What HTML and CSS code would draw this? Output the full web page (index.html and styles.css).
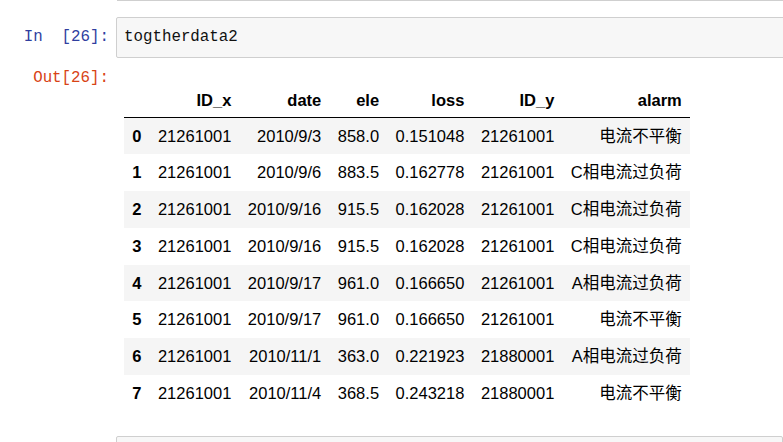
FILE: index.html
```html
<!DOCTYPE html>
<html>
<head>
<meta charset="utf-8">
<link rel="stylesheet" href="styles.css">
</head>
<body>
<div class="nb">
  <div class="prev-cell"></div>
  <div class="cell-row input-row">
    <div class="prompt in-prompt">In&nbsp;&nbsp;[26]:</div>
    <div class="input-box">togtherdata2</div>
  </div>
  <div class="cell-row output-row">
    <div class="prompt out-prompt">Out[26]:</div>
    <div class="output">
      <table class="df">
        <thead>
          <tr><th></th><th>ID_x</th><th>date</th><th>ele</th><th>loss</th><th>ID_y</th><th>alarm</th></tr>
        </thead>
        <tbody>
          <tr><th>0</th><td>21261001</td><td>2010/9/3</td><td>858.0</td><td>0.151048</td><td>21261001</td><td>电流不平衡</td></tr>
          <tr><th>1</th><td>21261001</td><td>2010/9/6</td><td>883.5</td><td>0.162778</td><td>21261001</td><td>C相电流过负荷</td></tr>
          <tr><th>2</th><td>21261001</td><td>2010/9/16</td><td>915.5</td><td>0.162028</td><td>21261001</td><td>C相电流过负荷</td></tr>
          <tr><th>3</th><td>21261001</td><td>2010/9/16</td><td>915.5</td><td>0.162028</td><td>21261001</td><td>C相电流过负荷</td></tr>
          <tr><th>4</th><td>21261001</td><td>2010/9/17</td><td>961.0</td><td>0.166650</td><td>21261001</td><td>A相电流过负荷</td></tr>
          <tr><th>5</th><td>21261001</td><td>2010/9/17</td><td>961.0</td><td>0.166650</td><td>21261001</td><td>电流不平衡</td></tr>
          <tr><th>6</th><td>21261001</td><td>2010/11/1</td><td>363.0</td><td>0.221923</td><td>21880001</td><td>A相电流过负荷</td></tr>
          <tr><th>7</th><td>21261001</td><td>2010/11/4</td><td>368.5</td><td>0.243218</td><td>21880001</td><td>电流不平衡</td></tr>
        </tbody>
      </table>
    </div>
  </div>
  <div class="next-cell"></div>
</div>
</body>
</html>
```
FILE: styles.css
```css
html, body {
  margin: 0;
  padding: 0;
  background: #fff;
  overflow: hidden;
}
.nb {
  width: 783px;
  height: 442px;
  overflow: hidden;
  display: flex;
  flex-direction: column;
}
.prev-cell {
  margin-left: 117px;
  height: 0;
  border-bottom: 1px solid #cfcfcf;
  flex: none;
}
.cell-row {
  display: flex;
  flex: none;
}
.prompt {
  width: 109px;
  padding-right: 7px;
  flex: none;
  text-align: right;
  font-family: "Liberation Mono", "DejaVu Sans Mono", monospace;
  font-size: 15.8px;
  white-space: nowrap;
}
.input-row {
  margin-top: 16px;
}
.in-prompt {
  color: #303f9f;
  line-height: 41px;
}
.input-box {
  flex: none;
  width: 700px;
  box-sizing: border-box;
  background: #f7f7f7;
  border: 1px solid #cfcfcf;
  border-radius: 2px;
  padding: 10px 7px;
  line-height: 19px;
  font-family: "Liberation Mono", "DejaVu Sans Mono", monospace;
  font-size: 15.8px;
  color: #111;
}
.output-row {
  margin-top: 9px;
}
.out-prompt {
  color: #d84315;
  line-height: 22px;
}
.output {
  padding-top: 13px;
  padding-left: 8px;
}
.df {
  border-collapse: collapse;
  border-spacing: 0;
  font-family: "Liberation Sans", Arial, "Noto Sans CJK SC", sans-serif;
  font-size: 16.5px;
  color: #000;
}
.df th, .df td {
  text-align: right;
  padding: 9px 8.25px;
  line-height: 18.7px;
  white-space: nowrap;
  vertical-align: middle;
}
.df th {
  font-weight: bold;
}
.df thead th {
  padding-top: 11px;
  padding-bottom: 7px;
  border-bottom: 1px solid #000;
}
.df tbody tr:nth-child(odd) {
  background: #f5f5f5;
}
.next-cell {
  margin-top: 25px;
  margin-left: 116px;
  height: 40px;
  background: #f7f7f7;
  border: 1px solid #cfcfcf;
  border-radius: 2px;
  flex: none;
}
```
